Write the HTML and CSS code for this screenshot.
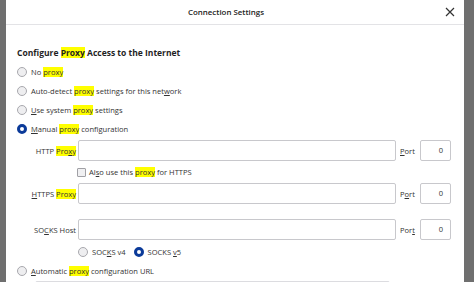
FILE: index.html
```html
<!DOCTYPE html>
<html>
<head>
<meta charset="utf-8">
<link rel="stylesheet" href="styles.css">
</head>
<body>
<div class="page">
  <div class="dialog">
    <div class="header">
      <span class="title">Connection Settings</span>
      <svg class="close" width="10" height="10" viewBox="0 0 10 10"><path d="M1 1L9 9M9 1L1 9" stroke="#333" stroke-width="1.2" fill="none"/></svg>
    </div>
    <div class="content">
      <div class="heading">Configure <mark>Proxy</mark> Access to the Internet</div>
      <div class="radio-row"><span class="radio"></span><span>No <mark>proxy</mark></span></div>
      <div class="radio-row"><span class="radio"></span><span>Auto-detect <mark>proxy</mark> settings for this net<u>w</u>ork</span></div>
      <div class="radio-row"><span class="radio"></span><span><u>U</u>se system <mark>proxy</mark> settings</span></div>
      <div class="radio-row"><span class="radio checked"></span><span><u>M</u>anual <mark>proxy</mark> configuration</span></div>

      <div class="proxy-row first">
        <label class="plabel">HTTP <mark>Pro<u>x</u>y</mark></label>
        <div class="input"></div>
        <span class="port-label"><u>P</u>ort</span>
        <div class="input port">0</div>
      </div>
      <div class="check-row">
        <span class="checkbox"></span><span>Al<u>s</u>o use this <mark>proxy</mark> for HTTPS</span>
      </div>
      <div class="proxy-row">
        <label class="plabel"><u>H</u>TTPS <mark>Proxy</mark></label>
        <div class="input"></div>
        <span class="port-label">P<u>o</u>rt</span>
        <div class="input port">0</div>
      </div>
      <div class="proxy-row socks">
        <label class="plabel">SO<u>C</u>KS Host</label>
        <div class="input"></div>
        <span class="port-label">Por<u>t</u></span>
        <div class="input port">0</div>
      </div>
      <div class="socks-ver">
        <span class="radio-row inline"><span class="radio"></span><span>SOC<u>K</u>S v4</span></span>
        <span class="radio-row inline"><span class="radio checked"></span><span>SOCKS <u>v</u>5</span></span>
      </div>
      <div class="radio-row"><span class="radio"></span><span><u>A</u>utomatic <mark>proxy</mark> configuration URL</span></div>
      <div class="url-input"></div>
    </div>
  </div>
</div>
</body>
</html>
```
FILE: styles.css
```css
* { box-sizing: border-box; }
html, body { margin: 0; padding: 0; }
body {
  width: 474px;
  height: 282px;
  overflow: hidden;
  background: #6f6f6f;
  font-family: "Open Sans", "Noto Sans", sans-serif;
  font-size: 7.55px;
  color: #333;
}
.page {
  height: 282px;
  display: flex;
  padding-left: 6px;
}
.dialog {
  width: 458px;
  height: 282px;
  background: #fff;
  overflow: hidden;
}
.header {
  height: 25px;
  border-bottom: 1px solid #e3e3e6;
  display: flex;
  align-items: center;
  justify-content: center;
  padding-right: 18px;
  position: relative;
}
.title {
  font-size: 7.9px;
  font-weight: 600;
  color: #222;
}
.close {
  position: absolute;
  right: 9px;
  top: 7px;
}
.content {
  padding-left: 11px;
}
mark {
  background: #ffff00;
  color: inherit;
  padding: 0;
}
u { text-decoration: underline; text-underline-offset: 1px; }
.heading {
  margin-top: 22px;
  height: 12px;
  line-height: 12px;
  font-size: 8.5px;
  font-weight: 700;
  color: #1f1f1f;
  margin-bottom: 3px;
}
.radio-row {
  display: flex;
  align-items: center;
  height: 19px;
  gap: 4px;
}
.radio-row.inline { display: inline-flex; }
.radio {
  width: 10px;
  height: 10px;
  border-radius: 50%;
  border: 1px solid #a8a8ad;
  background: #eeeef0;
  flex: none;
}
.radio.checked {
  border: 3px solid #0b3a99;
  background: #fff;
}
.proxy-row {
  display: grid;
  grid-template-columns: 59px 318px 20px 31px;
  column-gap: 2px;
  align-items: center;
  height: 21px;
}
.proxy-row.first { margin-top: 2px; }
.proxy-row.socks { margin-top: 15px; }
.plabel { text-align: right; white-space: nowrap; }
.input {
  height: 21px;
  border: 1px solid #c8c8cc;
  border-radius: 2px;
  background: #fff;
}
.input.port {
  text-align: right;
  padding-right: 7px;
  line-height: 19px;
}
.port-label { padding-left: 2px; }
.check-row {
  display: flex;
  align-items: center;
  gap: 3px;
  height: 20px;
  margin-top: 1px;
  margin-left: 60px;
  margin-bottom: 1px;
}
.checkbox {
  width: 9px;
  height: 9px;
  border: 1px solid #a0a0a5;
  border-radius: 1px;
  background: #f0f0f2;
}
.socks-ver {
  display: flex;
  gap: 8px;
  margin-left: 61px;
  margin-top: 2px;
}
.url-input {
  margin-left: 18px;
  width: 355px;
  height: 10px;
  margin-top: 1px;
  border: 1px solid #dcdce0;
  border-radius: 2px;
}
```
